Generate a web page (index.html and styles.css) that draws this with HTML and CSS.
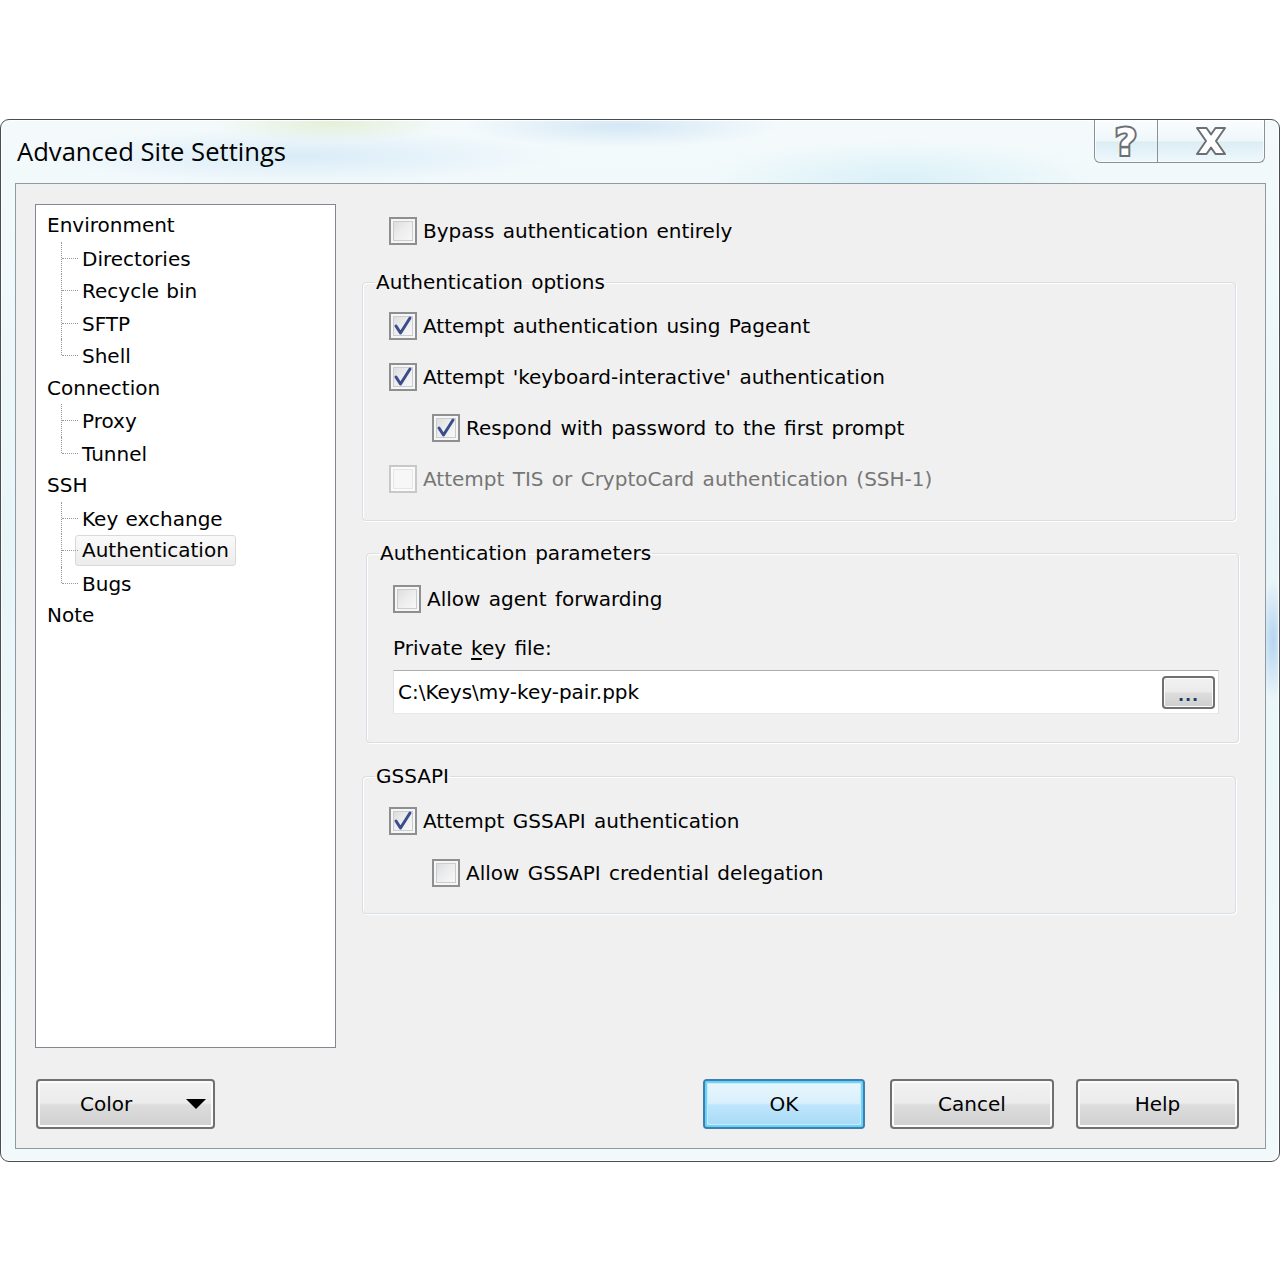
FILE: index.html
```html
<!DOCTYPE html>
<html>
<head>
<meta charset="utf-8">
<title>Advanced Site Settings</title>
<link rel="stylesheet" href="styles.css">
</head>
<body>
<div class="window">
  <div class="titlebar">
    <div class="title">Advanced Site Settings</div>
    <div class="caption-buttons">
      <div class="cap-btn cap-help"><span class="help-glyph">?</span></div>
      <div class="cap-btn cap-close">
        <svg width="32" height="30" viewBox="0 0 32 30">
          <path d="M2 2 H11.5 L16 8.5 L20.5 2 H30 L21 15 L30 28 H20.5 L16 21.5 L11.5 28 H2 L11 15 Z" fill="#ffffff" stroke="#6c6f74" stroke-width="2" stroke-linejoin="round"/>
        </svg>
      </div>
    </div>
  </div>

  <div class="client">
    <div class="content">
      <ul class="tree">
        <li class="node"><span class="label">Environment</span>
          <ul class="children">
            <li class="child"><span class="label">Directories</span></li>
            <li class="child"><span class="label">Recycle bin</span></li>
            <li class="child"><span class="label">SFTP</span></li>
            <li class="child"><span class="label">Shell</span></li>
          </ul>
        </li>
        <li class="node"><span class="label">Connection</span>
          <ul class="children">
            <li class="child"><span class="label">Proxy</span></li>
            <li class="child"><span class="label">Tunnel</span></li>
          </ul>
        </li>
        <li class="node"><span class="label">SSH</span>
          <ul class="children">
            <li class="child"><span class="label">Key exchange</span></li>
            <li class="child"><span class="label selected">Authentication</span></li>
            <li class="child"><span class="label">Bugs</span></li>
          </ul>
        </li>
        <li class="node"><span class="label">Note</span></li>
      </ul>

      <div class="pane">
        <div class="check bypass">
          <span class="box"></span><span class="text">Bypass authentication entirely</span>
        </div>

        <fieldset class="group group-options">
          <legend>Authentication options</legend>
          <div class="check">
            <span class="box"><svg class="tick" width="24" height="24" viewBox="0 0 24 24"><polyline points="5,12 9.5,19 19,4" fill="none" stroke="#3b4d8c" stroke-width="3" stroke-linecap="round" stroke-linejoin="round"/></svg></span><span class="text">Attempt authentication using Pageant</span>
          </div>
          <div class="check row">
            <span class="box"><svg class="tick" width="24" height="24" viewBox="0 0 24 24"><polyline points="5,12 9.5,19 19,4" fill="none" stroke="#3b4d8c" stroke-width="3" stroke-linecap="round" stroke-linejoin="round"/></svg></span><span class="text">Attempt 'keyboard-interactive' authentication</span>
          </div>
          <div class="check row indent">
            <span class="box"><svg class="tick" width="24" height="24" viewBox="0 0 24 24"><polyline points="5,12 9.5,19 19,4" fill="none" stroke="#3b4d8c" stroke-width="3" stroke-linecap="round" stroke-linejoin="round"/></svg></span><span class="text">Respond with password to the first prompt</span>
          </div>
          <div class="check row disabled">
            <span class="box"></span><span class="text">Attempt TIS or CryptoCard authentication (SSH-1)</span>
          </div>
        </fieldset>

        <fieldset class="group group-params">
          <legend>Authentication parameters</legend>
          <div class="check">
            <span class="box"></span><span class="text">Allow agent forwarding</span>
          </div>
          <div class="field-label">Private <u>k</u>ey file:</div>
          <div class="keyfile">
            <span class="keyfile-text">C:\Keys\my-key-pair.ppk</span>
            <span class="browse">...</span>
          </div>
        </fieldset>

        <fieldset class="group group-gss">
          <legend>GSSAPI</legend>
          <div class="check">
            <span class="box"><svg class="tick" width="24" height="24" viewBox="0 0 24 24"><polyline points="5,12 9.5,19 19,4" fill="none" stroke="#3b4d8c" stroke-width="3" stroke-linecap="round" stroke-linejoin="round"/></svg></span><span class="text">Attempt GSSAPI authentication</span>
          </div>
          <div class="check row2 indent">
            <span class="box"></span><span class="text">Allow GSSAPI credential delegation</span>
          </div>
        </fieldset>
      </div>
    </div>

    <div class="buttons">
      <div class="btn btn-color"><span class="btn-color-text">Color</span><span class="drop-arrow"></span></div>
      <div class="btn btn-ok">OK</div>
      <div class="btn btn-cancel">Cancel</div>
      <div class="btn btn-help">Help</div>
    </div>
  </div>
</div>
</body>
</html>
```

FILE: styles.css
```css
* { box-sizing: border-box; }

html, body {
  margin: 0;
  padding: 0;
  background: #ffffff;
}

body {
  font-family: "DejaVu Sans", "Liberation Sans", sans-serif;
  font-size: 20px;
  color: #000;
}

.window {
  margin-top: 119px;
  width: 1280px;
  height: 1043px;
  border: 1px solid #4a4d52;
  border-radius: 9px;
  box-shadow: inset 0 0 0 1px rgba(255,255,255,0.85);
  background:
    radial-gradient(ellipse 120px 18px at 330px 4px, rgba(200,220,150,0.35), transparent),
    radial-gradient(ellipse 160px 22px at 620px 6px, rgba(140,190,230,0.30), transparent),
    radial-gradient(ellipse 200px 40px at 900px 60px, rgba(170,225,240,0.35), transparent),
    radial-gradient(ellipse 260px 28px at 300px 36px, rgba(170,210,240,0.35), transparent),
    radial-gradient(ellipse 14px 60px at 1272px 520px, rgba(120,170,230,0.45), transparent),
    linear-gradient(180deg, #f4fafc 0%, #e8f5f8 40%, #f2f9fb 100%);
  display: flex;
  flex-direction: column;
  overflow: hidden;
}

/* ---------- title bar ---------- */
.titlebar {
  height: 63px;
  display: flex;
  justify-content: space-between;
  align-items: flex-start;
  flex: none;
}

.title {
  font-family: "Open Sans", "Noto Sans", sans-serif;
  font-size: 25.6px;
  line-height: 63px;
  padding-left: 16px;
  color: #000;
}

.caption-buttons {
  display: flex;
  margin-right: 14px;
  height: 43px;
  border: 1px solid #8d9097;
  border-top: none;
  border-radius: 0 0 6px 6px;
  background: linear-gradient(180deg, rgba(255,255,255,0.6) 0%, rgba(235,245,250,0.6) 50%, rgba(205,228,240,0.6) 52%, rgba(235,248,252,0.7) 100%);
  box-shadow: inset 0 0 0 1px rgba(255,255,255,0.7);
  overflow: hidden;
}

.cap-btn {
  height: 100%;
  display: flex;
  align-items: center;
  justify-content: center;
}

.cap-help {
  width: 63px;
  border-right: 1px solid #8d9097;
}

.cap-close {
  width: 106px;
}

.help-glyph {
  font-family: "DejaVu Sans", sans-serif;
  font-weight: bold;
  font-size: 38px;
  line-height: 38px;
  margin-top: 2px;
  color: #ffffff;
  -webkit-text-stroke: 4px #6c6f74;
  paint-order: stroke fill;
}

/* ---------- client ---------- */
.client {
  margin: 0 13px 12px 14px;
  height: 966px;
  border: 1px solid #8f9aa3;
  background: #f0f0f0;
  padding: 20px 26px 18px 19px;
  display: flex;
  flex-direction: column;
}

.content {
  display: flex;
  align-items: flex-start;
  gap: 26px;
  height: 844px;
  flex: none;
}

/* ---------- tree ---------- */
.tree {
  list-style: none;
  margin: 0;
  width: 301px;
  height: 844px;
  flex: none;
  background: #ffffff;
  border: 1px solid #828790;
  padding: 4px 0 0 11px;
}

.tree ul {
  list-style: none;
  margin: 0;
  padding: 0;
}

.node > .label,
.child > .label {
  display: inline-block;
  height: 32.5px;
  line-height: 32.5px;
  white-space: nowrap;
  word-spacing: 1px;
}

.child {
  position: relative;
  padding-left: 28px;
  height: 32.5px;
}

.child::before {
  content: "";
  position: absolute;
  left: 14px;
  top: 0;
  bottom: 0;
  border-left: 1px dotted #9a9a9a;
}

.child:last-child::before {
  bottom: 50%;
}

.child::after {
  content: "";
  position: absolute;
  left: 15px;
  top: 50%;
  width: 16px;
  border-top: 1px dotted #9a9a9a;
}

.child > .label {
  padding: 0 6px;
  border: 1px solid transparent;
}

.child > .label.selected {
  height: 31px;
  line-height: 29px;
  margin-top: 0.75px;
  border: 1px solid #d9d9d9;
  border-radius: 3px;
  background: linear-gradient(180deg, #fafafa 0%, #ececec 100%);
}

/* ---------- right pane ---------- */
.pane {
  width: 877px;
  flex: none;
  display: flex;
  flex-direction: column;
  word-spacing: 2px;
}

.check {
  display: flex;
  align-items: center;
  height: 28px;
  white-space: nowrap;
}

.check .text {
  margin-left: 6px;
  line-height: 28px;
}

.box {
  width: 28px;
  height: 28px;
  flex: none;
  border: 2px solid #8e8f8f;
  background: linear-gradient(135deg, #d5d7da 0%, #ececec 45%, #fbfbfb 100%);
  box-shadow: inset 0 0 0 2px #f6f6f6, inset 0 0 0 3px #c9cdd3;
  display: flex;
  align-items: center;
  justify-content: center;
}

.tick {
  display: block;
}

.check.disabled .box {
  border-color: #c8c8c8;
  background: #f7f7f7;
  box-shadow: inset 0 0 0 2px #fbfbfb, inset 0 0 0 3px #e6e6e6;
}

.check.disabled .text {
  color: #767676;
}

.bypass {
  margin-top: 13px;
  margin-left: 27px;
}

.group {
  margin: 0;
  min-width: 0;
  border: 1px solid #d5dfe5;
  border-radius: 4px;
  box-shadow: inset 1px 1px 0 #ffffff, 1px 1px 0 #ffffff;
  padding: 18px 20px 27px 26px;
}

.group legend {
  font-size: 20px;
  line-height: 24px;
  padding: 0 1px;
  margin-left: -14px;
}

.group-options {
  margin: 25px 3px 0 0;
}

.group-options .row {
  margin-top: 23px;
}

.check.indent {
  margin-left: 43px;
}

.group-params {
  margin: 20px 0 0 4px;
  padding: 20px 19px 28px 26px;
}

.field-label {
  margin-top: 23px;
  line-height: 24px;
}

.field-label u {
  text-decoration: underline;
  text-underline-offset: 3px;
}

.keyfile {
  margin-top: 10px;
  height: 44px;
  background: #ffffff;
  border: 1px solid;
  border-color: #abadb3 #dbdfe6 #e3e9ef #e2e3ea;
  display: flex;
  align-items: center;
  justify-content: space-between;
  padding: 0 3px 0 4px;
  word-spacing: 0;
}

.keyfile-text {
  line-height: 24px;
}

.browse {
  width: 53px;
  height: 33px;
  border: 2px solid #707070;
  border-radius: 4px;
  background: linear-gradient(180deg, #f2f2f2 0%, #ebebeb 48%, #dddddd 52%, #cfcfcf 100%);
  box-shadow: inset 0 0 0 1px #fcfcfc;
  font-weight: bold;
  font-size: 16px;
  line-height: 16px;
  text-align: center;
  padding-top: 10px;
  letter-spacing: 1px;
  color: #1a3a6a;
}

.group-gss {
  margin: 21px 3px 0 0;
  padding: 19px 20px 26px 26px;
}

.group-gss .row2 {
  margin-top: 24px;
}

/* ---------- bottom buttons ---------- */
.buttons {
  display: flex;
  align-items: center;
  margin-top: 31px;
  height: 50px;
  flex: none;
}

.btn {
  height: 50px;
  border: 2px solid #707070;
  border-radius: 4px;
  background: linear-gradient(180deg, #f2f2f2 0%, #ebebeb 48%, #dddddd 52%, #cfcfcf 100%);
  box-shadow: inset 0 0 0 2px #fbfbfb;
  display: flex;
  align-items: center;
  justify-content: center;
  line-height: 24px;
  flex: none;
}

.btn-color {
  width: 179px;
  margin-left: 1px;
  justify-content: flex-start;
  padding-left: 42px;
}

.btn-color-text {
  width: 54px;
}

.drop-arrow {
  margin-left: 52px;
  width: 0;
  height: 0;
  border-left: 10px solid transparent;
  border-right: 10px solid transparent;
  border-top: 10px solid #000;
}

.btn-ok {
  margin-left: auto;
  width: 162px;
  border-color: #3c7fb1;
  background: linear-gradient(180deg, #eaf6fd 0%, #d9f0fc 48%, #bee6fd 52%, #a7d9f5 100%);
  box-shadow: inset 0 0 0 2px #6cd3f8, inset 0 0 0 3px #c9ecfb;
}

.btn-cancel {
  margin-left: 25px;
  width: 164px;
}

.btn-help {
  margin-left: 22px;
  width: 163px;
}
```
